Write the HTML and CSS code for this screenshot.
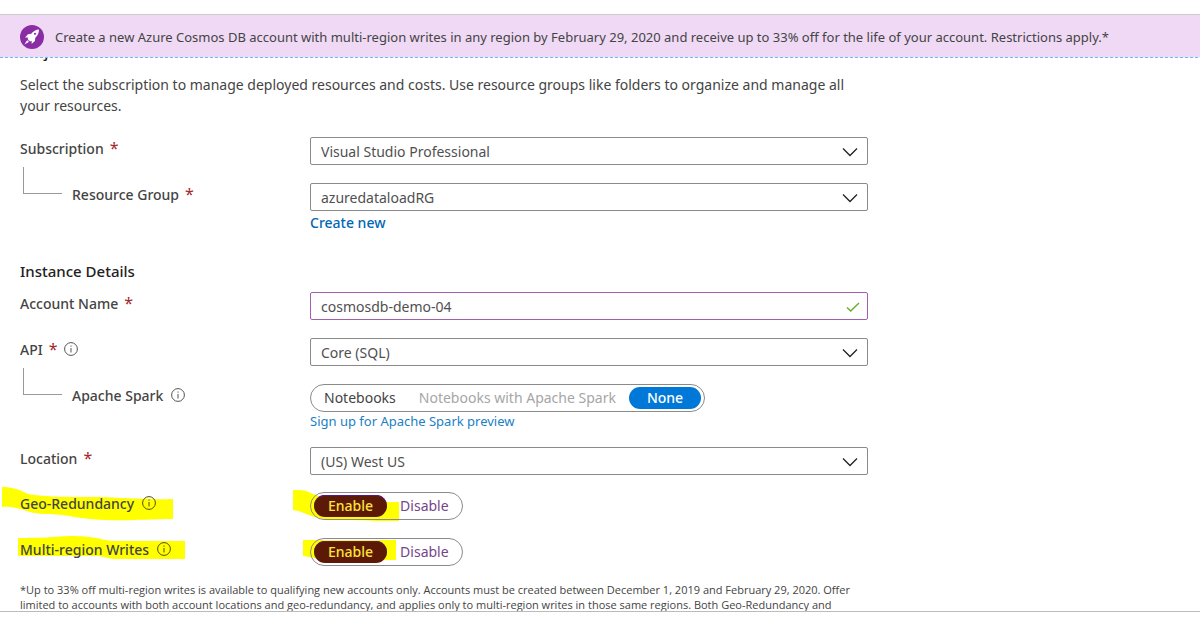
FILE: index.html
```html
<!DOCTYPE html>
<html lang="en">

<head>
    <meta charset="UTF-8" />
    <meta name="viewport" content="width=device-width, initial-scale=1.0" />
    <title>Create Azure Cosmos DB Account</title>
    <link rel="stylesheet" href="styles.css">
</head>

<body>
    <!-- shared icons -->
    <svg class="sprite" aria-hidden="true">
        <symbol id="chevron" viewBox="0 0 16 10">
            <path d="M1 1.500l7 7 7-7" fill="none" stroke="currentColor" stroke-width="1.300" />
        </symbol>
        <symbol id="info" viewBox="0 0 14 14">
            <circle cx="7" cy="7" r="6.400" fill="none" stroke="currentColor" stroke-width="1" />
            <path d="M7 6v4.500M7 3.500v1.200" stroke="currentColor" stroke-width="1" />
        </symbol>
    </svg>

    <div class="pane">
        <div class="banner">
            <svg class="rocket" viewBox="0 0 24 24" aria-hidden="true">
                <circle cx="12" cy="12" r="12" fill="#8a2da5" />
                <path d="M19 4.500c-3 .2-5.600 1.500-7.800 4.200L8 9.200 5 12.600l3.200-.2-.6 1.600 2.500 2.500 1.600-.7-.1 3.300 3.300-3.200.4-3.200c2.500-2.300 3.700-5 3.700-8.200z" fill="#fff" />
                <path d="M7.400 14.800l-3 4.700 4.900-2.800-.9.100.2-1.200-1.300.2z" fill="#fff" />
                <circle cx="15" cy="8.800" r="1.100" fill="#8a2da5" />
            </svg>
            <span>Create a new Azure Cosmos DB account with multi-region writes in any region by February 29, 2020 and receive up to 33% off for the life of your account. Restrictions apply.*</span>
        </div>

        <form class="content">
            <h3 class="project">Project Details</h3>
            <p class="intro">Select the subscription to manage deployed resources and costs. Use resource groups like folders to organize and manage all your resources.</p>

            <div class="row">
                <label for="subscription">Subscription <b>*</b></label>
                <div class="field">
                    <select id="subscription">
                        <option>Visual Studio Professional</option>
                    </select>
                    <svg class="chevron"><use href="#chevron" /></svg>
                </div>
            </div>
            <div class="row">
                <label for="group"><i class="elbow"></i>Resource Group <b>*</b></label>
                <div class="field">
                    <select id="group">
                        <option>azuredataloadRG</option>
                    </select>
                    <svg class="chevron"><use href="#chevron" /></svg>
                    <a class="strong" href="#">Create new</a>
                </div>
            </div>

            <h3>Instance Details</h3>
            <div class="row">
                <label for="account">Account Name <b>*</b></label>
                <div class="field">
                    <input class="valid" type="text" id="account" value="cosmosdb-demo-04">
                    <svg class="check" viewBox="0 0 14 10"><path d="M1 5.500l3.700 3.500L13 1" fill="none" stroke="#6bb12c" stroke-width="1.500" /></svg>
                </div>
            </div>
            <div class="row">
                <label for="api">API <b>*</b> <svg class="info"><use href="#info" /></svg></label>
                <div class="field">
                    <select id="api">
                        <option>Core (SQL)</option>
                    </select>
                    <svg class="chevron"><use href="#chevron" /></svg>
                </div>
            </div>
            <div class="row" role="radiogroup" aria-labelledby="spark">
                <div class="label" id="spark"><i class="elbow"></i>Apache Spark <svg class="info"><use href="#info" /></svg></div>
                <div class="field">
                    <div class="pills">
                        <label><input type="radio" name="spark"><span>Notebooks</span></label>
                        <label><input type="radio" name="spark" disabled><span>Notebooks with Apache Spark</span></label>
                        <label><input type="radio" name="spark" checked><span>None</span></label>
                    </div>
                    <a href="#">Sign up for Apache Spark preview</a>
                </div>
            </div>
            <div class="row location">
                <label for="location">Location <b>*</b></label>
                <div class="field">
                    <select id="location">
                        <option>(US) West US</option>
                    </select>
                    <svg class="chevron"><use href="#chevron" /></svg>
                </div>
            </div>
            <div class="row marked" role="radiogroup" aria-labelledby="geo">
                <svg class="marker" viewBox="0 0 420 40" aria-hidden="true">
                    <path d="M2 3c10 0 16 2 26 7 18 3 40 3 62 3 28 0 50 3 83 2v20c-24 0-40 2-68 1-27-1-38-6-60-6-18 0-28-9-43-7z" />
                    <path d="M293 6h6c9 0 12 4 20 6h62l5 6h13v19h-22c-20-2-45 1-62-4-8-2-13-6-22-7z" />
                </svg>
                <div class="label" id="geo">Geo-Redundancy <svg class="info"><use href="#info" /></svg></div>
                <div class="field">
                    <div class="pills">
                        <label><input type="radio" name="geo" checked><span>Enable</span></label>
                        <label><input type="radio" name="geo"><span>Disable</span></label>
                    </div>
                </div>
            </div>
            <div class="row marked" role="radiogroup" aria-labelledby="multi">
                <svg class="marker" viewBox="0 0 420 40" aria-hidden="true">
                    <path d="M18 8c20 0 36-1 52-2 24 0 28 3 42 5h73v18h-72c-8-1-10-3-18-3H18z" />
                    <path d="M303 10h93v20h-40c-14 3-26 0-36-1-6-1-10-2-17-3z" />
                </svg>
                <div class="label" id="multi">Multi-region Writes <svg class="info"><use href="#info" /></svg></div>
                <div class="field">
                    <div class="pills">
                        <label><input type="radio" name="multi" checked><span>Enable</span></label>
                        <label><input type="radio" name="multi"><span>Disable</span></label>
                    </div>
                </div>
            </div>

            <p class="note">*Up to 33% off multi-region writes is available to qualifying new accounts only. Accounts must be created between December 1, 2019 and February 29, 2020. Offer limited to accounts with both account locations and geo-redundancy, and applies only to multi-region writes in those same regions. Both Geo-Redundancy and</p>
        </form>
    </div>
</body>

</html>
```
FILE: styles.css
```css
* {
    box-sizing: border-box;
}

body {
    margin: 0;
    padding-top: 14px;
    background: #fff;
    color: #444;
    font-family: 'Noto Sans', 'Open Sans', sans-serif;
    font-size: 14px;
}

.sprite {
    display: none;
}

.pane {
    height: calc(100vh - 32px);
    overflow: hidden;
    border-top: 1px solid #ccc;
    border-bottom: 1px solid #bbb;
}

/* dashed focus line runs along the bottom edge */
.banner {
    position: relative;
    z-index: 2;
    display: flex;
    align-items: center;
    gap: 11px;
    height: 43px;
    padding: 1px 20px 0;
    background: repeating-linear-gradient(90deg, #6cb8f0 0 3px, #eef4fb 3px 5px) bottom / 100% 1px no-repeat, #efd9f5;
    font-size: 13px;
    white-space: nowrap;
}

.rocket {
    width: 24px;
    height: 24px;
    flex: none;
}

.content {
    max-width: 868px;
    padding-left: 20px;
}

h3 {
    margin: 0;
    color: #222;
    font-size: 15px;
    font-weight: 500;
    line-height: 20px;
}

.project {
    margin-top: -16px;
}

.intro {
    margin: 12px 0 21px;
    line-height: 21px;
}

.row {
    display: grid;
    grid-template-columns: 290px 1fr;
    margin-bottom: 18px;
}

.row > label,
.row > .label {
    display: flex;
    align-items: center;
    height: 22px;
    gap: 6px;
    font-weight: 500;
}

.row > .label {
    gap: 8px;
}

.row b {
    color: #a4262c;
    font-size: 16px;
    font-weight: 400;
}

.elbow {
    width: 39px;
    height: 27px;
    margin: -27px 4px 0 3px;
    border-left: 1px solid #999;
    border-bottom: 1px solid #999;
}

.label .elbow {
    margin-right: 2px;
}

.info {
    width: 14px;
    height: 14px;
    color: #555;
}

.field {
    position: relative;
}

select,
input[type="text"] {
    display: block;
    width: 100%;
    height: 28px;
    padding: 0 10px;
    appearance: none;
    background: #fff;
    border: 1px solid #8a8a8a;
    border-radius: 2px;
    color: #505050;
    font: inherit;
}

input.valid {
    border-color: #a25fb0;
}

.chevron,
.check {
    position: absolute;
    top: 10px;
    right: 10px;
    width: 16px;
    height: 10px;
    color: #222;
    pointer-events: none;
}

.check {
    right: 7px;
}

a {
    display: block;
    color: #1b80c4;
    font-size: 13px;
    line-height: 18px;
    text-decoration: none;
}

a.strong {
    color: #0067b5;
    font-size: 14px;
    font-weight: 500;
    line-height: 24px;
}

.row + h3 {
    margin: 26px 0 11px;
}

.pills {
    display: inline-flex;
    gap: 3px;
    height: 28px;
    padding: 2px 3px;
    border: 1px solid #8a8a8a;
    border-radius: 14px;
    vertical-align: top;
}

.pills input {
    position: absolute;
    opacity: 0;
}

.pills span {
    display: block;
    padding: 0 10px;
    border-radius: 11px;
    line-height: 22px;
}

.pills input:disabled + span {
    color: #a6a6a6;
}

.pills input:checked + span {
    padding: 0 18px;
    background: #0078d7;
    color: #fff;
    font-weight: 500;
}

.location {
    margin: -1px 0 17px;
}

.marked {
    position: relative;
    z-index: 0;
}

/* highlighter strokes sit behind the row */
.marker {
    position: absolute;
    z-index: -1;
    top: -8px;
    left: -20px;
    width: 420px;
    height: 40px;
    fill: #ff0;
}

.marked .info {
    color: #554d00;
}

.marked .pills span {
    color: #75458a;
}

.marked .pills input:checked + span {
    padding: 0 14px;
    background: #5c1a06;
    box-shadow: inset 0 1px #5a1590;
    color: #ffe23c;
}

.marked:has(+ .note) {
    margin-bottom: 16px;
}

.note {
    margin: 0;
    font-family: 'Open Sans', sans-serif;
    font-size: 11px;
    line-height: 15px;
}
```
